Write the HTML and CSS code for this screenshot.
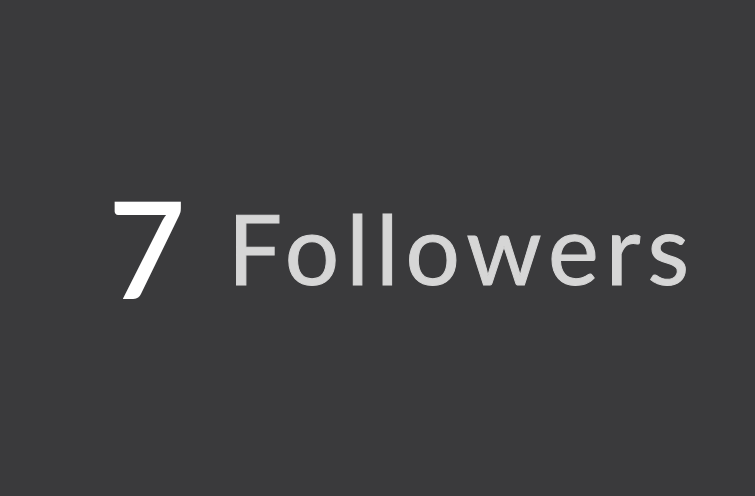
FILE: index.html
```html
<!DOCTYPE html>
<html lang="en">
<head>
    <meta charset="UTF-8">
    <meta name="viewport" content="width=device-width, initial-scale=1.0">
    <title>Followers</title>
    <link rel="stylesheet" href="styles.css">
</head>
<body>
    <div class="stat">
        <span class="count">7</span>
        <span class="label">Followers</span>
    </div>
</body>
</html>
```

FILE: styles.css
```css
body {
    margin: 0;
    height: 100vh;
    background: #3a3a3c;
    font-family: Lato, "Open Sans", sans-serif;
    display: flex;
    align-items: center;
}
.stat {
    display: flex;
    align-items: center;
    gap: 42px;
    padding-left: 108px;
}
.count {
    color: #ffffff;
    font-size: 134px;
    font-weight: 600;
    line-height: 1;
}
.label {
    color: #d6d6d6;
    font-size: 96px;
    line-height: 1;
    letter-spacing: 7px;
    -webkit-text-stroke: 1px #d6d6d6;
}
```
